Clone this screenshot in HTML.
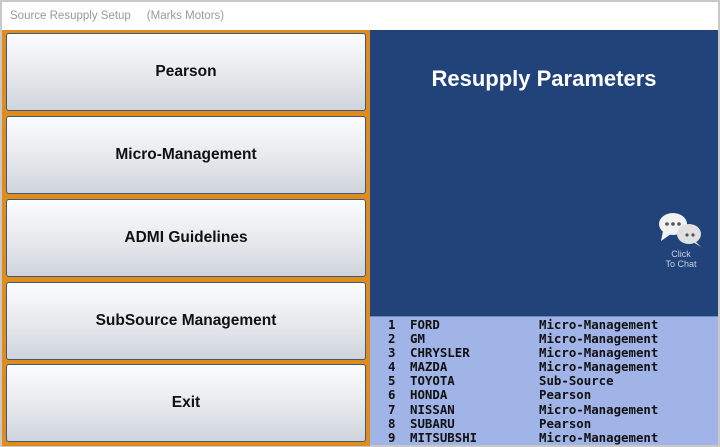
<!DOCTYPE html>
<html><head><style>
*{margin:0;padding:0;box-sizing:border-box}
body{width:720px;height:447px;background:#c8c8c8;position:relative;overflow:hidden;font-family:"Liberation Sans",sans-serif}
#title{position:absolute;left:2px;top:2px;width:716px;height:28px;background:#fff;color:#999;line-height:28px;padding-left:8px;font-family:"Liberation Sans",sans-serif;font-size:11.5px}
#left{position:absolute;left:2px;top:30px;width:368px;height:416px;background:#e08c1c}
.btn{position:absolute;left:4px;width:360px;height:78px;border:1.5px solid #3c5a7c;border-radius:3px;background:linear-gradient(#fbfcfd,#e8eaee 50%,#cfd4dc);font-weight:bold;font-size:15.5px;color:#111;display:flex;align-items:center;justify-content:center}
#blue{position:absolute;left:370px;top:30px;width:348px;height:286px;background:#22427a}
#blue h1{position:absolute;top:36px;left:0;width:348px;text-align:center;color:#fff;font-size:22px;font-weight:bold}
#list{position:absolute;left:370px;top:316px;width:348px;height:129px;background:#a0b4e8;border-top:1px solid #6f86c0;font-family:"DejaVu Sans Mono","Liberation Mono",monospace;font-size:12.4px;font-weight:bold;color:#111}
.r{position:absolute;left:0;width:348px;height:14px;line-height:14px;white-space:pre}
.r span{position:absolute;top:0}
.r span:nth-child(1){left:18px}.r span:nth-child(2){left:40px}.r span:nth-child(3){left:169px}
.chat{position:absolute;left:287px;top:182px;color:#c8d0e0;font-size:9px;text-align:center;line-height:10px;width:48px}
</style></head><body>
<div id="title">Source Resupply Setup &nbsp;&nbsp;&nbsp; (Marks Motors)</div>
<div id="left">
<div class="btn" style="top:3px">Pearson</div>
<div class="btn" style="top:86px">Micro-Management</div>
<div class="btn" style="top:169px">ADMI Guidelines</div>
<div class="btn" style="top:252px">SubSource Management</div>
<div class="btn" style="top:334px">Exit</div>
</div>
<div id="blue"><h1>Resupply Parameters</h1>
<svg style="position:absolute;left:287px;top:181px" width="48" height="38" viewBox="0 0 48 38">
<ellipse cx="16" cy="13" rx="14" ry="11" fill="#f2f2f2"/><path d="M6 20 L4 30 L14 23Z" fill="#f2f2f2"/>
<ellipse cx="32" cy="23" rx="12" ry="10" fill="#e0e0e0"/><path d="M38 30 L44 36 L36 31Z" fill="#e0e0e0"/>
<circle cx="10" cy="13" r="1.8" fill="#555"/><circle cx="16" cy="13" r="1.8" fill="#555"/><circle cx="22" cy="13" r="1.8" fill="#555"/>
<circle cx="30" cy="24" r="1.6" fill="#555"/><circle cx="36" cy="24" r="1.6" fill="#555"/>
</svg>
<div class="chat" style="top:219px">Click<br>To Chat</div>
</div>
<div id="list">
<div class="r" style="top:1px"><span>1</span><span>FORD</span><span>Micro-Management</span></div>
<div class="r" style="top:15px"><span>2</span><span>GM</span><span>Micro-Management</span></div>
<div class="r" style="top:29px"><span>3</span><span>CHRYSLER</span><span>Micro-Management</span></div>
<div class="r" style="top:43px"><span>4</span><span>MAZDA</span><span>Micro-Management</span></div>
<div class="r" style="top:57px"><span>5</span><span>TOYOTA</span><span>Sub-Source</span></div>
<div class="r" style="top:71px"><span>6</span><span>HONDA</span><span>Pearson</span></div>
<div class="r" style="top:86px"><span>7</span><span>NISSAN</span><span>Micro-Management</span></div>
<div class="r" style="top:100px"><span>8</span><span>SUBARU</span><span>Pearson</span></div>
<div class="r" style="top:114px"><span>9</span><span>MITSUBSHI</span><span>Micro-Management</span></div>
</div>
</body></html>
